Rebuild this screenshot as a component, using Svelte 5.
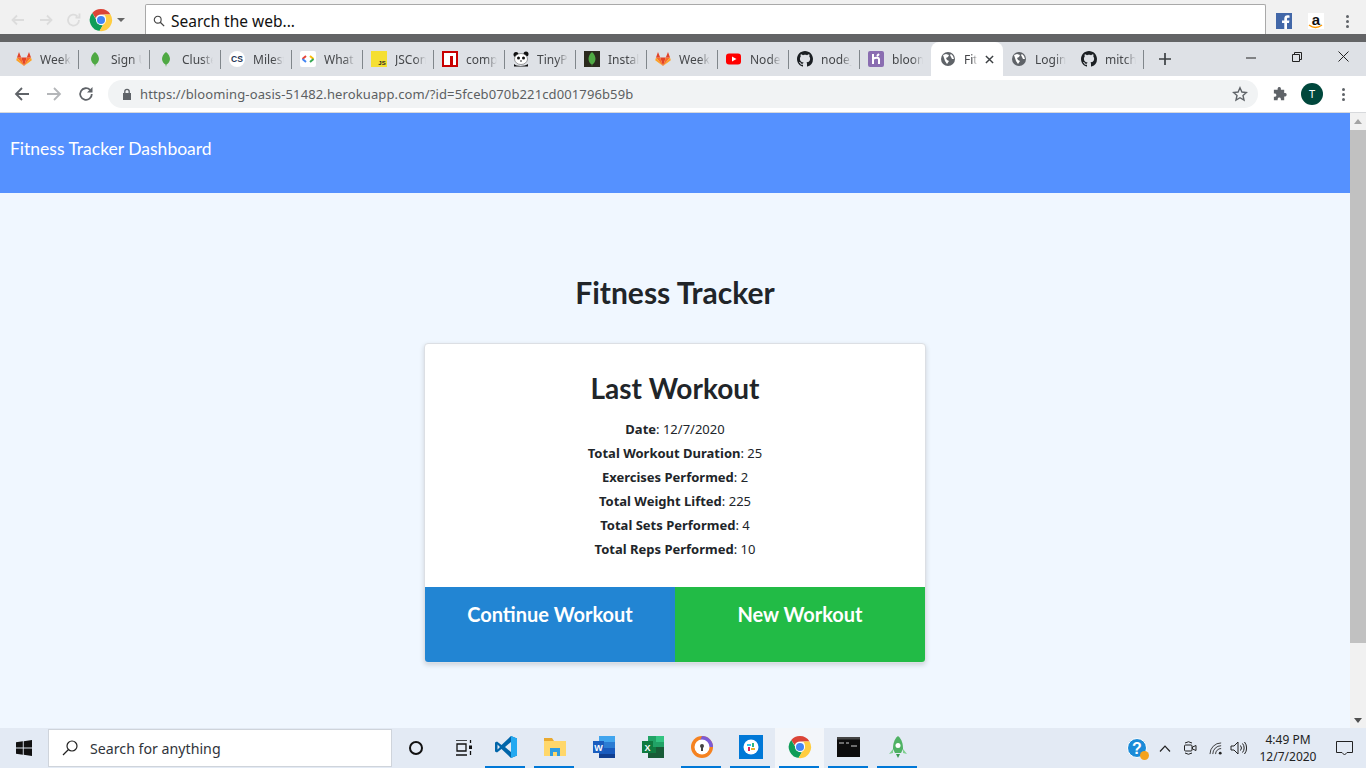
<script>
  const tabs = [
    { icon: 'gitlab', label: 'Week' },
    { icon: 'leaf', label: 'Sign U' },
    { icon: 'leaf', label: 'Cluste' },
    { icon: 'cs', label: 'Milest' },
    { icon: 'code', label: 'What' },
    { icon: 'js', label: 'JSCon' },
    { icon: 'npm', label: 'comp' },
    { icon: 'panda', label: 'TinyPl' },
    { icon: 'leafdark', label: 'Install' },
    { icon: 'gitlab', label: 'Week' },
    { icon: 'youtube', label: 'Node' },
    { icon: 'github', label: 'node_' },
    { icon: 'heroku', label: 'bloom' }
  ];
  const stats = [
    ['Date', '12/7/2020'],
    ['Total Workout Duration', '25'],
    ['Exercises Performed', '2'],
    ['Total Weight Lifted', '225'],
    ['Total Sets Performed', '4'],
    ['Total Reps Performed', '10']
  ];
</script>

{#snippet chromeLogo(size)}
  <svg width={size} height={size} viewBox="0 0 48 48">
    <path fill="#db4437" d="M24 2a22 22 0 0 1 19 11H24a11 11 0 0 0-10.5 7.5L6.5 10A22 22 0 0 1 24 2z"/>
    <path fill="#0f9d58" d="M24 46A22 22 0 0 1 6.500 10l9 15.500a11 11 0 0 0 12.300 8.800L21 46z"/>
    <path fill="#ffcd40" d="M43 13a22 22 0 0 1-22 33l10-17a11 11 0 0 0-1-16z"/>
    <circle cx="24" cy="24" r="10" fill="#fff"/>
    <circle cx="24" cy="24" r="8" fill="#4285f4"/>
  </svg>
{/snippet}

{#snippet globe()}
  <svg class="fav" viewBox="0 0 16 16">
    <circle cx="8" cy="8" r="7" fill="#5f6368"/>
    <path fill="#fff" d="M3 4l3-1 3 1-1 2-2 1 1 2 2 1-2 3-2-3-1-3zM11 3l2 2 1 3-2 0-1-2-1-2z"/>
  </svg>
{/snippet}

{#snippet fav(name)}
  {#if name === 'gitlab'}
    <svg class="fav" viewBox="0 0 16 16">
      <path fill="#e24329" d="M8 15 5.200 6.500h5.600z"/>
      <path fill="#fc6d26" d="M8 15 1 6.500h4.200zM8 15l7-8.500h-4.200z"/>
      <path fill="#fca326" d="M1 6.500.2 9.200 8 15zM15 6.500l.8 2.700L8 15z"/>
      <path fill="#e24329" d="M1 6.500 3 1l2.200 5.500zM15 6.500 13 1l-2.200 5.500z"/>
    </svg>
  {:else if name === 'leaf'}
    <svg class="fav" viewBox="0 0 16 16">
      <path fill="#4fa944" d="M8 1c2.500 2 4 4.500 4 7 0 2.700-2 4.600-3.500 5.500L8 16l-.5-2.500C6 12.600 4 10.700 4 8c0-2.500 1.500-5 4-7z"/>
    </svg>
  {:else if name === 'leafdark'}
    <svg class="fav" viewBox="0 0 16 16">
      <rect width="16" height="16" fill="#2b2a1e"/>
      <path fill="#4fa944" d="M8 1c2.300 2 3.500 4.500 3.500 7 0 2.700-1.800 4.600-3.200 5.500L8 16l-.3-2.500C6.300 12.600 4.500 10.700 4.500 8c0-2.500 1.200-5 3.500-7z"/>
    </svg>
  {:else if name === 'cs'}
    <svg class="fav" viewBox="0 0 16 16">
      <circle cx="8" cy="8" r="8" fill="#fff"/>
      <text x="8" y="11" text-anchor="middle" class="favtext cs">CS</text>
    </svg>
  {:else if name === 'code'}
    <svg class="fav" viewBox="0 0 16 16">
      <rect width="16" height="16" rx="2" fill="#fff"/>
      <path fill="none" stroke="#ea4335" stroke-width="2" d="M6 5 2.500 8"/>
      <path fill="none" stroke="#4285f4" stroke-width="2" d="M2.500 8 6 11"/>
      <path fill="none" stroke="#fbbc05" stroke-width="2" d="M10 5l3.500 3"/>
      <path fill="none" stroke="#34a853" stroke-width="2" d="M13.500 8 10 11"/>
    </svg>
  {:else if name === 'js'}
    <svg class="fav" viewBox="0 0 16 16">
      <rect width="16" height="16" fill="#f7df1e" opacity=".9"/>
      <text x="11" y="14" text-anchor="middle" class="favtext js">JS</text>
    </svg>
  {:else if name === 'npm'}
    <svg class="fav" viewBox="0 0 16 16">
      <rect width="16" height="16" fill="#c80000"/>
      <path fill="#fff" d="M2 2h12v12h-3V5H8v9H2z"/>
    </svg>
  {:else if name === 'panda'}
    <svg class="fav" viewBox="0 0 16 16">
      <circle cx="3" cy="3.500" r="2.500" fill="#111"/>
      <circle cx="13" cy="3" r="2.500" fill="#111"/>
      <ellipse cx="8" cy="8" rx="6.500" ry="5.500" fill="#fff" stroke="#444" stroke-width=".5"/>
      <circle cx="5.500" cy="7" r="1.500" fill="#111"/>
      <circle cx="10.500" cy="7" r="1.500" fill="#111"/>
      <circle cx="8" cy="10" r=".8" fill="#111"/>
      <path fill="#111" d="M1 13c2 2.500 11 2.500 14 0v2.500H1z"/>
    </svg>
  {:else if name === 'youtube'}
    <svg class="fav" viewBox="0 0 16 16">
      <rect y="2.500" width="15" height="11" rx="3" fill="#f00"/>
      <path fill="#fff" d="M6 5.500 10.500 8 6 10.500z"/>
    </svg>
  {:else if name === 'github'}
    <svg class="fav" viewBox="0 0 16 16">
      <path fill="#1b1f23" d="M8 0C3.580 0 0 3.580 0 8c0 3.540 2.290 6.530 5.470 7.590.4.070.55-.17.550-.38 0-.19-.01-.82-.01-1.490-2.010.37-2.530-.49-2.690-.94-.09-.23-.48-.94-.82-1.130-.28-.15-.68-.52-.01-.53.630-.01 1.080.58 1.230.82.720 1.210 1.870.87 2.330.66.070-.52.280-.87.510-1.070-1.780-.2-3.640-.89-3.640-3.950 0-.87.310-1.590.82-2.150-.08-.2-.36-1.020.08-2.120 0 0 .67-.21 2.200.82.640-.18 1.320-.27 2-.27s1.360.09 2 .27c1.530-1.040 2.200-.82 2.200-.82.44 1.100.16 1.920.08 2.120.51.560.82 1.270.82 2.150 0 3.070-1.870 3.750-3.650 3.950.29.250.54.730.54 1.480 0 1.070-.01 1.930-.01 2.200 0 .21.150.46.550.38A8.010 8.010 0 0 0 16 8c0-4.420-3.580-8-8-8z"/>
    </svg>
  {:else if name === 'heroku'}
    <svg class="fav" viewBox="0 0 16 16">
      <rect width="16" height="16" rx="2" fill="#8a6db1"/>
      <path fill="none" stroke="#fff" stroke-width="2" d="M5 3v10M5 8c3-2 6-1.500 6 .5V13M11 3 9 5"/>
    </svg>
  {/if}
{/snippet}

<div class="screen">
  <div class="outer">
    <div class="outer-nav">
      <svg class="nav-ico" viewBox="0 0 16 16"><path d="M14 8H3M7 3.500 2.500 8 7 12.500" fill="none" stroke="#dcdcdc" stroke-width="1.800"/></svg>
      <svg class="nav-ico" viewBox="0 0 16 16"><path d="M2 8h11M9 3.500 13.500 8 9 12.500" fill="none" stroke="#dcdcdc" stroke-width="1.800"/></svg>
      <svg class="nav-ico" viewBox="0 0 16 16"><path d="M13 8a5.500 5.500 0 1 1-1.700-3.900M13.500 1.500V5.500H9.500" fill="none" stroke="#dcdcdc" stroke-width="1.800"/></svg>
    </div>
    <div class="outer-logo">
      {@render chromeLogo(24)}
      <span class="caret"></span>
    </div>
    <div class="outer-search">
      <svg class="glass" viewBox="0 0 14 14"><circle cx="5.500" cy="5.500" r="4" fill="none" stroke="#444" stroke-width="1.300"/><path d="M8.500 8.500 13 13" stroke="#444" stroke-width="1.500"/></svg>
      <span>Search the web...</span>
    </div>
    <div class="outer-ext">
      <svg class="ext-fb" viewBox="0 0 16 16"><rect width="16" height="16" fill="#4267a8"/><path fill="#fff" d="M11 16V10h2l.4-2.500H11V6c0-.8.300-1.200 1.200-1.200h1.300V2.500c-.6-.1-1.200-.2-2-.2-2 0-3.200 1.200-3.200 3.300v1.900H6V10h2.300v6z"/></svg>
      <span class="ext-az"><span class="az-a">a</span><svg class="az-smile" viewBox="0 0 16 5"><path d="M1 1c4 3 9 3 13 0" fill="none" stroke="#f90" stroke-width="1.500"/></svg></span>
      <span class="dots grey"><i></i><i></i><i></i></span>
    </div>
  </div>
  <div class="strip"></div>

  <div class="tabbar">
    {#each tabs as t}
      <div class="tab">
        {@render fav(t.icon)}
        <span class="tab-label">{t.label}</span>
      </div>
    {/each}
    <div class="tab active">
      {@render globe()}
      <span class="tab-label short">Fit</span>
      <svg class="tab-x" viewBox="0 0 10 10"><path d="M1 1l8 8M9 1l-8 8" stroke="#3c4043" stroke-width="1.600"/></svg>
    </div>
    <div class="tab plain">
      {@render globe()}
      <span class="tab-label">Login</span>
    </div>
    <div class="tab">
      {@render fav('github')}
      <span class="tab-label">mitch</span>
    </div>
    <svg class="plus" viewBox="0 0 12 12"><path d="M6 0v12M0 6h12" stroke="#3c4043" stroke-width="1.700"/></svg>
    <div class="winbtns">
      <svg class="win-min" viewBox="0 0 10 10"><path d="M0 5h10" stroke="#222" stroke-width="1"/></svg>
      <svg class="win-max" viewBox="0 0 10 10"><path d="M.5 2.500h7v7h-7zM2.500 2.500v-2h7v7h-2" fill="none" stroke="#222" stroke-width="1"/></svg>
      <svg class="win-close" viewBox="0 0 11 11"><path d="M.5.500l10 10M10.500.500l-10 10" stroke="#222" stroke-width="1"/></svg>
    </div>
  </div>

  <div class="toolbar">
    <svg class="tool-ico first" viewBox="0 0 16 16"><path d="M15 8H2.500M8 2 2 8l6 6" fill="none" stroke="#5f6368" stroke-width="1.800"/></svg>
    <svg class="tool-ico" viewBox="0 0 16 16"><path d="M1 8h12.500M8 2l6 6-6 6" fill="none" stroke="#b4b6b9" stroke-width="1.800"/></svg>
    <svg class="tool-ico" viewBox="0 0 16 16"><path d="M13.800 8a5.800 5.800 0 1 1-1.700-4.100" fill="none" stroke="#5f6368" stroke-width="1.800"/><path fill="#5f6368" d="M14.500 1v5.500H9z"/></svg>
    <div class="omnibox">
      <svg class="lock" viewBox="0 0 10 12"><path fill="#5f6368" d="M1 5h8v7H1z"/><path d="M2.800 5V3.500a2.200 2.200 0 0 1 4.400 0V5" fill="none" stroke="#5f6368" stroke-width="1.300"/></svg>
      <span class="url">https://blooming-oasis-51482.herokuapp.com/?id=5fceb070b221cd001796b59b</span>
      <svg class="star" viewBox="0 0 16 16"><path d="M8 1.800l1.900 4.200 4.500.5-3.400 3 1 4.500L8 11.700 4 14l1-4.500-3.400-3 4.500-.5z" fill="none" stroke="#5f6368" stroke-width="1.400"/></svg>
    </div>
    <svg class="puzzle" viewBox="0 0 16 16"><path fill="#5f6368" d="M6 1.500a1.800 1.800 0 0 1 3.500 0V3H13v3.500h1.300a1.800 1.800 0 0 1 0 3.500H13v4H9.500v-1.300a1.800 1.800 0 0 0-3.500 0V14H2v-3.500h1.300a1.800 1.800 0 0 0 0-3.500H2V3h4z"/></svg>
    <span class="avatar">T</span>
    <span class="dots"><i></i><i></i><i></i></span>
  </div>

  <div class="viewport">
    <div class="page">
      <header class="nav">Fitness Tracker Dashboard</header>
      <main class="main">
        <h1>Fitness Tracker</h1>
        <section class="card">
          <div class="card-body">
            <h2>Last Workout</h2>
            {#each stats as s}
              <p><strong>{s[0]}</strong>: {s[1]}</p>
            {/each}
          </div>
          <div class="actions">
            <a class="btn blue" href="#continue">Continue Workout</a>
            <a class="btn green" href="#new">New Workout</a>
          </div>
        </section>
      </main>
    </div>
    <div class="scrollbar">
      <span class="arrow up"></span>
      <span class="thumb"></span>
      <span class="arrow down"></span>
    </div>
  </div>

  <footer class="taskbar">
    <svg class="start" viewBox="0 0 16 16"><path fill="#111" d="M0 2.300 6.800 1.300V7.500H0zM7.700 1.200 16 0V7.500H7.700zM0 8.400h6.800v6.300L0 13.700zM7.700 8.400H16V16l-8.300-1.200z"/></svg>
    <div class="ts-search">
      <svg class="ts-glass" viewBox="0 0 16 16"><circle cx="10" cy="6" r="5" fill="none" stroke="#222" stroke-width="1.200"/><path d="M6.500 9.500 1 15" stroke="#222" stroke-width="1.200"/></svg>
      <span>Search for anything</span>
    </div>
    <span class="cortana"></span>
    <svg class="taskview" viewBox="0 0 18 16"><path d="M1 0h11M1 15h11M2 4h9v7H2z" fill="none" stroke="#111" stroke-width="1.300"/><path d="M15.500 0v3M15.500 11v4" stroke="#111" stroke-width="1.300"/><rect x="14" y="5.500" width="3" height="3.500" fill="#111"/></svg>
    <div class="apps">
      <div class="app on">
        <svg viewBox="0 0 24 24"><path fill="#0065a9" d="M17 1 7.500 10 3 6.500 1 7.500v9l2 1 4.500-3.500L17 23l6-2.500v-17zM17 7v10l-6-5zM3.500 9.500 6 12l-2.500 2.500z"/><path fill="#23a9f1" d="M17 1l6 2.500v17L17 23z"/></svg>
      </div>
      <div class="app on">
        <svg viewBox="0 0 24 24"><path fill="#e9a92f" d="M1 3h8l2 3h-10z"/><path fill="#ffd76a" d="M1 6h22v15H1z"/><path fill="#2f9de0" d="M7 13h10v8h-3v-4h-4v4H7z"/></svg>
      </div>
      <div class="app">
        <svg viewBox="0 0 24 24"><path fill="#41a5ee" d="M7 1h16v6H7z"/><path fill="#2b7cd3" d="M7 7h16v6H7z"/><path fill="#185abd" d="M7 13h16v6H7z"/><path fill="#103f91" d="M7 19h16v4H7z"/><rect x="1" y="6" width="11" height="12" fill="#1a5ebf"/><text x="6.500" y="15.500" text-anchor="middle" class="favtext wx">W</text></svg>
      </div>
      <div class="app">
        <svg viewBox="0 0 24 24"><path fill="#21a366" d="M7 1h16v11H7z"/><path fill="#33c481" d="M15 1h8v6h-8z"/><path fill="#107c41" d="M7 12h8v6H7z"/><path fill="#185c37" d="M7 18h16v5H7zM15 12h8v6h-8z"/><rect x="1" y="6" width="11" height="12" fill="#0f7b40"/><text x="6.500" y="15.500" text-anchor="middle" class="favtext wx">X</text></svg>
      </div>
      <div class="app on">
        <svg viewBox="0 0 24 24"><circle cx="12" cy="12" r="11" fill="#f58220"/><path fill="#7b5bd6" d="M12 1a11 11 0 0 1 11 11h-4a7 7 0 0 0-9-6.500z"/><circle cx="12" cy="12" r="7.500" fill="#fff"/><circle cx="12" cy="11" r="2" fill="#444"/><path fill="#444" d="M11 12h2v4h-2z"/></svg>
      </div>
      <div class="app on">
        <svg viewBox="0 0 24 24"><rect width="24" height="24" fill="#0078d7"/><circle cx="12" cy="12" r="7.500" fill="#fff"/><path stroke="#36c5f0" stroke-width="2" d="M8 10h4"/><path stroke="#2eb67d" stroke-width="2" d="M14 8v4"/><path stroke="#ecb22e" stroke-width="2" d="M12 14h4"/><path stroke="#e01e5a" stroke-width="2" d="M10 12v4"/></svg>
      </div>
      <div class="app on active">
        {@render chromeLogo(24)}
      </div>
      <div class="app on">
        <svg viewBox="0 0 24 24"><rect y="2" width="23" height="20" fill="#0c0c0c"/><rect y="2" width="23" height="2.500" fill="#444"/><path d="M2 8h5M9 8h3M14 11h6" stroke="#ccc" stroke-width="1.200"/></svg>
      </div>
      <div class="app on">
        <svg viewBox="0 0 24 24"><path fill="#4fb264" d="M12 1c4 3.500 5 8 5 13l-2 4H9l-2-4c0-5 1-9.500 5-13z"/><path fill="#7fcf8f" d="M7 14 3 19l4-1zM17 14l4 5-4-1z"/><circle cx="12" cy="10.500" r="2.500" fill="#fff"/><path fill="#3b9a50" d="M10 19h4l-2 4z"/></svg>
      </div>
    </div>
    <div class="tray">
      <span class="help">?<span class="help-dot"></span></span>
      <svg class="tray-ico caret-up" viewBox="0 0 12 7"><path d="M1 6.500 6 1.200l5 5.300" fill="none" stroke="#222" stroke-width="1.200"/></svg>
      <svg class="tray-ico meet" viewBox="0 0 14 16"><path d="M2 3a6 6 0 0 1 7 0M2 13a6 6 0 0 0 7 0" fill="none" stroke="#222"/><rect x="1.500" y="5" width="7.500" height="6" rx="1" fill="none" stroke="#222"/><path d="M9.500 7 13 5.500v5L9.500 9z" fill="none" stroke="#222"/></svg>
      <svg class="tray-ico wifi" viewBox="0 0 16 14"><path d="M1 13A12 12 0 0 1 13 1M4 13A9 9 0 0 1 13 4M7 13A6 6 0 0 1 13 7" fill="none" stroke="#333" stroke-width="1"/><circle cx="12" cy="12" r="1.500" fill="#222"/></svg>
      <svg class="tray-ico vol" viewBox="0 0 17 14"><path d="M1 5h3l4-4v12l-4-4H1z" fill="none" stroke="#222"/><path d="M10.500 4.500a4 4 0 0 1 0 5M12.500 2.500a7 7 0 0 1 0 9M14.500 1a9.500 9.500 0 0 1 0 12" fill="none" stroke="#222"/></svg>
      <div class="clock"><span>4:49 PM</span><span>12/7/2020</span></div>
      <svg class="notif" viewBox="0 0 17 15"><path d="M.5.500h16v11h-5.500l-2.500 2.500-2.500-2.500H.5z" fill="none" stroke="#222"/></svg>
    </div>
  </footer>
</div>

<style>
  :global(body) { margin: 0; overflow: hidden; }
  .screen { width: 1366px; height: 768px; display: flex; flex-direction: column; overflow: hidden; font-family: "Noto Sans", sans-serif; background: #fff; }
  svg { display: block; flex: none; }

  .outer { height: 34px; background: #f1f1f1; display: flex; align-items: flex-start; }
  .outer-nav { display: flex; gap: 12px; padding: 12px 0 0 10px; width: 89px; box-sizing: border-box; }
  .nav-ico { width: 16px; height: 16px; }
  .outer-logo { display: flex; align-items: center; gap: 4px; padding-top: 8px; width: 56px; }
  .caret { border: 4px solid transparent; border-top: 4px solid #666; border-bottom: 0; }
  .outer-search { width: 1121px; height: 30px; margin-top: 4px; box-sizing: border-box; background: #fff; border: 1px solid #a9a9a9; border-bottom: 0; border-radius: 2px 2px 0 0; display: flex; align-items: center; gap: 6px; padding: 2px 0 0 7px; font: 15.500px "Noto Sans", sans-serif; color: #111; }
  .glass { width: 12px; height: 12px; }
  .outer-ext { display: flex; align-items: center; padding: 13px 0 0 10px; }
  .ext-fb { width: 16px; height: 16px; }
  .ext-az { width: 16px; height: 16px; margin-left: 16px; background: #fff; position: relative; display: block; }
  .az-a { display: block; font: 700 15px/13px "Liberation Sans", sans-serif; text-align: center; color: #111; }
  .az-smile { position: absolute; left: 0; bottom: 0; width: 16px; height: 5px; }
  .dots { display: flex; flex-direction: column; gap: 2px; }
  .dots i { width: 3px; height: 3px; border-radius: 50%; background: #5f6368; }
  .dots.grey { margin-left: 22px; }

  .strip { height: 8px; background: #636466; }

  .tabbar { height: 34px; background: #dee1e6; display: flex; padding-left: 8px; position: relative; }
  .tab { width: 71px; height: 34px; box-sizing: border-box; display: flex; align-items: center; padding-left: 8px; position: relative; font-size: 12px; color: #45474a; }
  .tab::after { content: ""; position: absolute; right: 0; top: 8px; width: 1px; height: 19px; background: #80868b; }
  .tab.active, .tab.plain { width: 72px; }
  .tab.active { background: #fff; border-radius: 8px 8px 0 0; padding-left: 9px; }
  .tab.active::after, .tab.plain::after { display: none; }
  .tab.plain { width: 70px; }
  .tab:nth-child(13)::after { display: none; }
  .fav { width: 16px; height: 16px; }
  .tab-label { margin-left: 8px; width: 31px; overflow: hidden; white-space: nowrap; -webkit-mask-image: linear-gradient(90deg, #000 65%, transparent); mask-image: linear-gradient(90deg, #000 65%, transparent); }
  .tab-label.short { width: 13px; margin-left: 8px; }
  .tab-x { width: 9px; height: 9px; margin-left: 8px; }
  .favtext { font-family: "Liberation Sans", sans-serif; font-weight: 700; }
  .cs { font-size: 8.500px; fill: #1d3554; }
  .js { font-size: 6px; fill: #222; }
  .wx { font-size: 9px; fill: #fff; }
  .plus { width: 12px; height: 12px; position: absolute; left: 1159px; top: 11px; }
  .winbtns { position: absolute; left: 1246px; top: 0; width: 120px; height: 34px; }
  .win-min { position: absolute; left: 0; top: 11px; width: 10px; height: 10px; }
  .win-max { position: absolute; left: 46px; top: 10px; width: 10px; height: 10px; }
  .win-close { position: absolute; left: 92px; top: 9px; width: 11px; height: 11px; }

  .toolbar { height: 36px; background: #fff; display: flex; align-items: center; border-bottom: 1px solid #d7d9dc; box-sizing: content-box; }
  .tool-ico { width: 16px; height: 16px; margin-left: 16px; }
  .tool-ico.first { margin-left: 14px; }
  .omnibox { width: 1150px; height: 28px; margin-left: 14px; border-radius: 14px; background: #f1f3f4; display: flex; align-items: center; padding-left: 14px; box-sizing: border-box; }
  .lock { width: 10px; height: 12px; }
  .url { margin-left: 8px; font: 13px "Noto Sans", sans-serif; color: #5c5f62; letter-spacing: .12px; }
  .star { width: 16px; height: 16px; margin-left: auto; margin-right: 10px; }
  .puzzle { width: 15px; height: 15px; margin-left: 14px; }
  .avatar { width: 22px; height: 22px; margin-left: 14px; border-radius: 50%; background: #00473c; color: #fff; font: 11px/22px "Noto Sans", sans-serif; text-align: center; }
  .toolbar .dots { margin-left: 19px; }

  .viewport { height: 615px; display: flex; }
  .page { width: 1350px; background: #f0f7ff; display: flex; flex-direction: column; }
  .nav { height: 80px; box-sizing: border-box; background: #5591ff; color: #fff; padding: 25px 0 0 10px; font: 17.500px/22px Lato, sans-serif; }
  .main { display: flex; flex-direction: column; align-items: center; padding-top: 80px; }
  h1 { margin: 0; font: 700 30px/38px Lato, sans-serif; color: #212529; }
  .card { width: 502px; margin-top: 32px; box-sizing: border-box; border: 1px solid #dcdfe4; border-radius: 4px; background: #fff; overflow: hidden; box-shadow: 0 2px 5px rgba(0,0,0,.15); text-align: center; }
  .card-body { height: 243px; box-sizing: border-box; padding-top: 25px; color: #212529; }
  h2 { margin: 0 0 10px; font: 700 28px/38px Lato, sans-serif; color: #212529; }
  p { margin: 0; height: 24px; font: 13px/24px "Noto Sans", sans-serif; }
  strong { font-weight: 700; }
  .actions { display: flex; height: 75px; }
  .btn { flex: 1; box-sizing: border-box; padding-top: 13px; font: 700 20px/28px Lato, sans-serif; color: #fff; text-decoration: none; }
  .blue { background: #2285d3; }
  .green { background: #22bb46; }

  .scrollbar { width: 16px; background: #f1f1f1; display: flex; flex-direction: column; align-items: center; }
  .arrow { border: 4px solid transparent; flex: none; }
  .arrow.up { border-bottom: 5px solid #a3a3a3; border-top: 0; margin-top: 6px; }
  .arrow.down { border-top: 5px solid #505050; border-bottom: 0; margin-bottom: 5px; }
  .thumb { width: 100%; height: 513px; background: #c1c1c1; margin: 6px 0 auto; }

  .taskbar { height: 40px; background: #e3eaf4; display: flex; align-items: center; position: relative; }
  .start { width: 16px; height: 16px; margin-left: 16px; }
  .ts-search { width: 344px; height: 38px; margin-left: 16px; box-sizing: border-box; background: #fff; border: 1px solid #cfd4db; display: flex; align-items: center; gap: 12px; padding-left: 13px; font: 14.200px "Noto Sans", sans-serif; color: #30343a; }
  .ts-glass { width: 16px; height: 16px; }
  .cortana { width: 10px; height: 10px; margin-left: 17px; border: 2.500px solid #111; border-radius: 50%; }
  .taskview { width: 18px; height: 16px; margin-left: 32px; }
  .apps { display: flex; margin-left: 8px; height: 40px; }
  .app { width: 49px; height: 40px; box-sizing: border-box; display: flex; align-items: center; justify-content: center; position: relative; padding-bottom: 2px; }
  .app svg { width: 24px; height: 24px; }
  .app.on::after { content: ""; position: absolute; left: 4px; right: 5px; bottom: 0; height: 2px; background: #0078d7; }
  .app.active { background: #f3f6fa; }
  .tray { position: absolute; left: 1127px; top: 0; width: 239px; height: 40px; display: flex; align-items: center; }
  .help { width: 20px; height: 20px; border-radius: 50%; background: #1b8bd8; color: #fff; font: 700 16px/20px "Liberation Sans", sans-serif; text-align: center; position: relative; border: 1px solid #fff; margin-left: 0; flex: none; box-sizing: border-box; }
  .help-dot { position: absolute; right: -3px; bottom: -3px; width: 9px; height: 9px; border-radius: 50%; background: #f4a21d; }
  .tray-ico { flex: none; }
  .caret-up { width: 12px; height: 7px; margin-left: 12px; }
  .meet { width: 14px; height: 16px; margin-left: 12px; }
  .wifi { width: 15px; height: 13px; margin-left: 12px; }
  .vol { width: 17px; height: 14px; margin-left: 6px; }
  .clock { width: 64px; margin-left: 9px; display: flex; flex-direction: column; align-items: center; font: 12px/17px "Noto Sans", sans-serif; color: #222; }
  .notif { width: 17px; height: 15px; margin-left: 16px; }
</style>
